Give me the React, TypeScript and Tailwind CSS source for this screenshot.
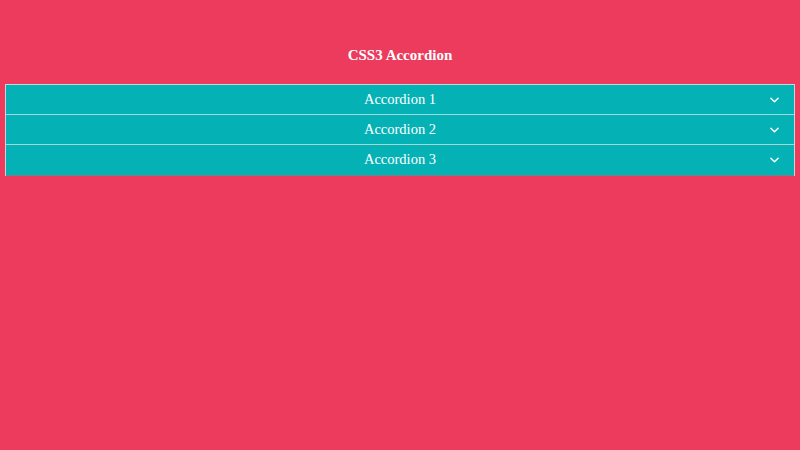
import { useState } from 'react'

const items = [
  { title: 'Accordion 1', body: 'Lorem ipsum dolor sit amet, consectetur adipiscing elit.' },
  { title: 'Accordion 2', body: 'Sed do eiusmod tempor incididunt ut labore et dolore magna aliqua.' },
  { title: 'Accordion 3', body: 'Ut enim ad minim veniam, quis nostrud exercitation ullamco.' },
]

function Chevron({ open }: { open: boolean }) {
  return (
    <svg
      viewBox="0 0 10 6"
      className={open ? 'w-[9px] h-[6px] rotate-180' : 'w-[9px] h-[6px]'}
      fill="none"
      stroke="white"
      strokeWidth="1.6"
      strokeLinecap="round"
      strokeLinejoin="round"
    >
      <path d="M1 1l4 4 4-4" />
    </svg>
  )
}

export default function App() {
  const [open, setOpen] = useState<number | null>(null)

  return (
    <div className="min-h-screen w-full bg-[#ec3b5c] px-[5px] pt-[45px] font-['Liberation_Serif',serif] text-white">
      <h1 className="text-center text-[15px] font-bold leading-[20px] mb-[19px]">CSS3 Accordion</h1>

      {/* Panels */}
      <div className="border border-[#c9d6d8] border-b-0 bg-[#04b2b5]">
        {items.map((item, i) => (
          <div key={item.title} className={i > 0 ? 'border-t border-[#a3d8da]' : ''}>
            <button
              onClick={() => setOpen(open === i ? null : i)}
              className="relative flex h-[29px] w-full items-center justify-center text-[14.5px] leading-none"
            >
              {item.title}
              <span className="absolute right-[15px] top-[12px] flex">
                <Chevron open={open === i} />
              </span>
            </button>
            {open === i && (
              <div className="bg-white px-4 py-3 text-left text-[14px] text-gray-700">{item.body}</div>
            )}
          </div>
        ))}
        <div className="h-[2px] bg-[#3a9a9f]" />
      </div>
    </div>
  )
}
